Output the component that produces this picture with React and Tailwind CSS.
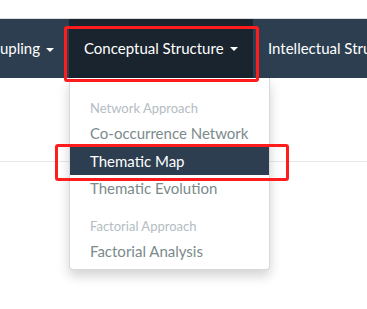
export default function App() {
  const caret = <span className="inline-block ml-[6px] align-middle border-t-[4px] border-t-white border-x-[4px] border-x-transparent" />

  return (
    <div className="relative w-[367px] h-[309px] overflow-hidden bg-white font-['Lato','Liberation_Sans',sans-serif]">
      <div className="h-[19px] border-b border-[#dcdcdc]" />

      {/* Navbar */}
      <div className="flex h-[59px] bg-[#2c3e50] text-[15px] text-white">
        <div className="w-[69px] shrink-0 overflow-hidden flex justify-end items-center">
          <span className="whitespace-nowrap pr-[15px]">Bibliographic Coupling{caret}</span>
        </div>
        <div className="relative w-[184px] shrink-0 flex items-center px-[15px] bg-[#1a242f] whitespace-nowrap">
          Conceptual Structure{caret}
          {/* Dropdown */}
          <div className="absolute left-0 top-full z-10 w-[201px] pt-[19px] pb-[4px] bg-white border border-t-0 border-black/15 rounded-b-[4px] shadow-[0_6px_12px_rgba(0,0,0,0.175)]">
            <div className="h-[23px] leading-[23px] px-5 text-[13px] text-[#b4bcc2]">Network Approach</div>
            <div className="h-[27px] leading-[27px] px-5 text-[#7b8a8b]">Co-occurrence Network</div>
            <div className="h-[28px] leading-[28px] px-5 bg-[#2c3e50] text-white">Thematic Map</div>
            <div className="h-[27px] leading-[27px] px-5 text-[#7b8a8b]">Thematic Evolution</div>
            <div className="h-[13px]" />
            <div className="h-[23px] leading-[23px] px-5 text-[13px] text-[#b4bcc2]">Factorial Approach</div>
            <div className="h-[27px] leading-[27px] px-5 text-[#7b8a8b]">Factorial Analysis</div>
          </div>
        </div>
        <div className="shrink-0 flex items-center px-[15px] whitespace-nowrap">Intellectual Structure{caret}</div>
      </div>

      <div className="h-[84px] border-b border-[#e6e6e6]" />

      {/* Annotation boxes */}
      <div className="absolute left-[64px] top-[26px] w-[195px] h-[56px] border-[3px] border-[#ff1c1c] rounded-[3px] z-20" />
      <div className="absolute left-[55px] top-[144px] w-[234px] h-[37px] border-[3px] border-[#ff1c1c] rounded-[3px] z-20" />
    </div>
  )
}
